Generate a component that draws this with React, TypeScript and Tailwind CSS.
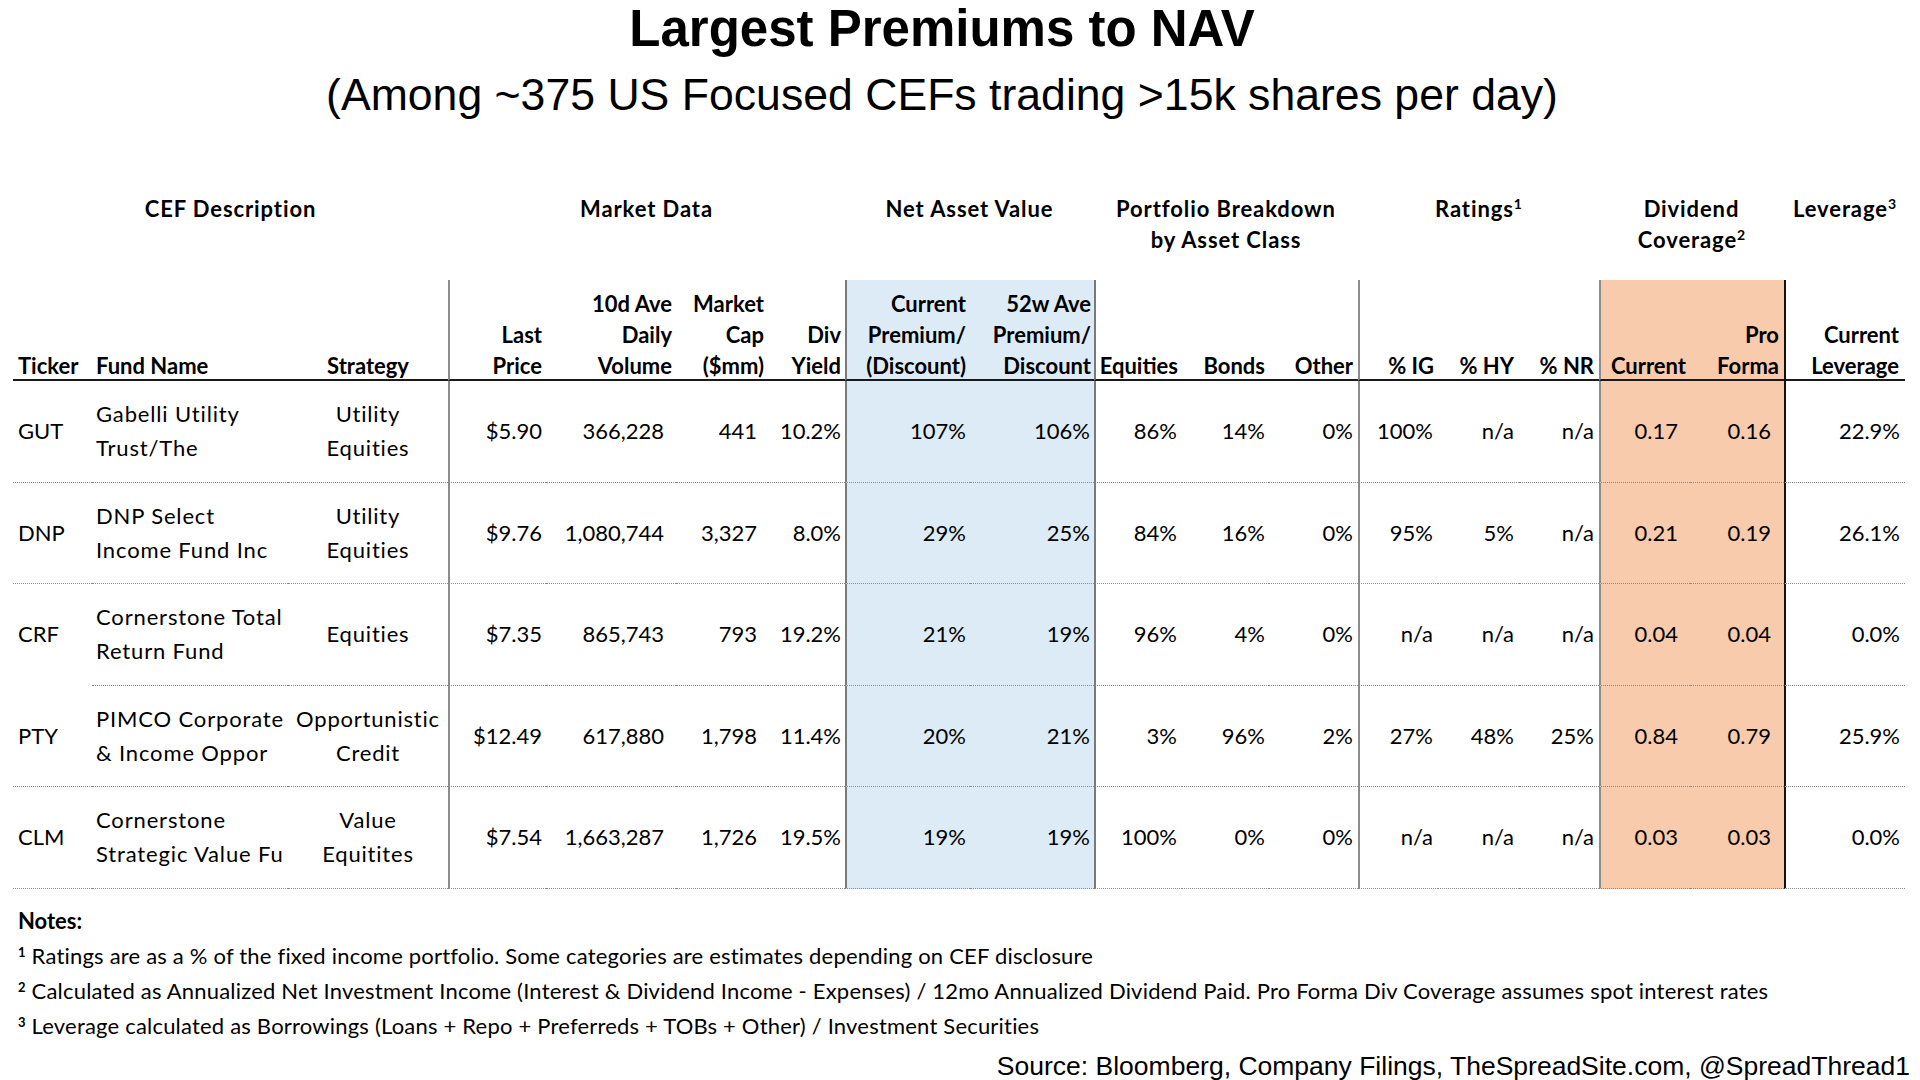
import React from "react";

type Col = {
  w: string;
  line: string;
  bg: string;
  head: string;
  body: string;
  label: string[];
};

const cols: Col[] = [
  { w: "w-[79px]", line: "", bg: "", head: "text-left pl-[5px]", body: "text-left pl-[5px]", label: ["Ticker"] },
  { w: "w-[196px]", line: "", bg: "", head: "text-left pl-[4px]", body: "text-left pl-[4px] tracking-[0.85px]", label: ["Fund Name"] },
  { w: "w-[160px]", line: "", bg: "", head: "text-center", body: "text-center tracking-[0.8px]", label: ["Strategy"] },
  { w: "w-[98px]", line: "border-l-2 border-l-[#8c8c8c]", bg: "", head: "text-right pr-[4px]", body: "text-right pr-[4px]", label: ["Last", "Price"] },
  { w: "w-[130px]", line: "", bg: "", head: "text-right pr-[4px]", body: "text-right pr-[12px]", label: ["10d Ave", "Daily", "Volume"] },
  { w: "w-[92px]", line: "", bg: "", head: "text-right pr-[4px]", body: "text-right pr-[11px]", label: ["Market", "Cap", "($mm)"] },
  { w: "w-[77px]", line: "", bg: "", head: "text-right pr-[4px]", body: "text-right pr-[4px]", label: ["Div", "Yield"] },
  { w: "w-[125px]", line: "border-l-2 border-l-[#7a7a7a]", bg: "bg-[#ddebf7]", head: "text-right pr-[4px]", body: "text-right pr-[4px]", label: ["Current", "Premium/", "(Discount)"] },
  { w: "w-[124px]", line: "", bg: "bg-[#ddebf7]", head: "text-right pr-[3px]", body: "text-right pr-[4px]", label: ["52w Ave", "Premium/", "Discount"] },
  { w: "w-[88px]", line: "border-l-2 border-l-[#7a7a7a]", bg: "", head: "text-right pr-[4px]", body: "text-right pr-[5px]", label: ["Equities"] },
  { w: "w-[87px]", line: "", bg: "", head: "text-right pr-[4px]", body: "text-right pr-[4px]", label: ["Bonds"] },
  { w: "w-[89px]", line: "", bg: "", head: "text-right pr-[5px]", body: "text-right pr-[5px]", label: ["Other"] },
  { w: "w-[80px]", line: "border-l-2 border-l-[#8c8c8c]", bg: "", head: "text-right pr-[4px]", body: "text-right pr-[5px]", label: ["% IG"] },
  { w: "w-[81px]", line: "", bg: "", head: "text-right pr-[5px]", body: "text-right pr-[5px]", label: ["% HY"] },
  { w: "w-[80px]", line: "", bg: "", head: "text-right pr-[5px]", body: "text-right pr-[5px]", label: ["% NR"] },
  { w: "w-[91px]", line: "border-l-2 border-l-[#8c8c8c]", bg: "bg-[#f8cbad]", head: "text-right pr-[4px]", body: "text-right pr-[12px]", label: ["Current"] },
  { w: "w-[94px]", line: "", bg: "bg-[#f8cbad]", head: "text-right pr-[5px]", body: "text-right pr-[13px]", label: ["Pro", "Forma"] },
  { w: "w-[121px]", line: "border-l-2 border-l-[#111]", bg: "", head: "text-right pr-[6px]", body: "text-right pr-[5px]", label: ["Current", "Leverage"] },
];

const groups = [
  { w: "w-[435px]", lines: ["CEF Description"], sup: "" },
  { w: "w-[397px]", lines: ["Market Data"], sup: "" },
  { w: "w-[249px]", lines: ["Net Asset Value"], sup: "" },
  { w: "w-[264px]", lines: ["Portfolio Breakdown", "by Asset Class"], sup: "" },
  { w: "w-[241px]", lines: ["Ratings"], sup: "1" },
  { w: "w-[185px]", lines: ["Dividend", "Coverage"], sup: "2" },
  { w: "w-[121px]", lines: ["Leverage"], sup: "3" },
];

const rows: string[][] = [
  ["GUT", "Gabelli Utility\nTrust/The", "Utility\nEquities", "$5.90", "366,228", "441", "10.2%", "107%", "106%", "86%", "14%", "0%", "100%", "n/a", "n/a", "0.17", "0.16", "22.9%"],
  ["DNP", "DNP Select\nIncome Fund Inc", "Utility\nEquities", "$9.76", "1,080,744", "3,327", "8.0%", "29%", "25%", "84%", "16%", "0%", "95%", "5%", "n/a", "0.21", "0.19", "26.1%"],
  ["CRF", "Cornerstone Total\nReturn Fund", "Equities", "$7.35", "865,743", "793", "19.2%", "21%", "19%", "96%", "4%", "0%", "n/a", "n/a", "n/a", "0.04", "0.04", "0.0%"],
  ["PTY", "PIMCO Corporate\n& Income Oppor", "Opportunistic\nCredit", "$12.49", "617,880", "1,798", "11.4%", "20%", "21%", "3%", "96%", "2%", "27%", "48%", "25%", "0.84", "0.79", "25.9%"],
  ["CLM", "Cornerstone\nStrategic Value Fu", "Value\nEquitites", "$7.54", "1,663,287", "1,726", "19.5%", "19%", "19%", "100%", "0%", "0%", "n/a", "n/a", "n/a", "0.03", "0.03", "0.0%"],
];

const notes = [
  { n: "1", text: "Ratings are as a % of the fixed income portfolio. Some categories are estimates depending on CEF disclosure" },
  { n: "2", text: "Calculated as Annualized Net Investment Income (Interest & Dividend Income - Expenses) / 12mo Annualized Dividend Paid. Pro Forma Div Coverage assumes spot interest rates" },
  { n: "3", text: "Leverage calculated as Borrowings (Loans + Repo + Preferreds + TOBs + Other) / Investment Securities" },
];

const App = () => {
  return (
    <div className="w-[1920px] h-[1080px] bg-white text-black overflow-hidden relative">
      {/* Title */}
      <div className="font-['Liberation_Sans',Arial,sans-serif] pr-[36px]">
        <h1 className="text-center font-bold text-[51px] leading-[56px] pt-[1px]">Largest Premiums to NAV</h1>
        <p className="text-center text-[44.6px] leading-[50px] mt-[13px]">
          (Among ~375 US Focused CEFs trading &gt;15k shares per day)
        </p>
      </div>

      {/* Table */}
      <div className="ml-[13px] w-[1892px] mt-[73px] font-['Lato',sans-serif] text-[22px]">
        <div className="flex h-[87px] font-bold leading-[31px] tracking-[0.9px]">
          {groups.map((g, i) => (
            <div key={i} className={`${g.w} text-center`}>
              {g.lines.map((l, j) => (
                <div key={j}>
                  {l}
                  {g.sup && j === g.lines.length - 1 && (
                    <sup className="text-[14px] tracking-normal -top-[0.6em]">{g.sup}</sup>
                  )}
                </div>
              ))}
            </div>
          ))}
        </div>

        <div className="flex h-[101px] font-bold leading-[31px]">
          {cols.map((c, i) => (
            <div
              key={i}
              className={`${c.w} ${c.line} ${c.bg} ${c.head} border-b-2 border-b-[#1a1a1a] flex flex-col justify-end whitespace-nowrap`}
            >
              {c.label.map((l, j) => (
                <div key={j} className="translate-y-[2px]">{l}</div>
              ))}
            </div>
          ))}
        </div>

        {rows.map((r, ri) => (
          <div key={ri} className="flex h-[101.5px] leading-[34px]">
            {cols.map((c, ci) => (
              <div
                key={ci}
                className={`${c.w} ${c.line} ${c.bg} ${c.body} border-b border-solid [border-bottom-style:dotted] ${
                  ri === 2 && ci === 0 ? "border-b-transparent" : "border-b-[#8a8a8a]"
                } flex flex-col justify-center whitespace-nowrap`}
              >
                {r[ci].split("\n").map((l, j) => (
                  <div key={j}>{l}</div>
                ))}
              </div>
            ))}
          </div>
        ))}

        {/* Notes */}
        <div className="mt-[14px] text-[22px] leading-[35px] pl-[5px]">
          <div className="font-bold">Notes:</div>
          {notes.map((n) => (
            <div key={n.n} className="whitespace-nowrap tracking-[0.2px]">
              <sup className="text-[13px] font-bold">{n.n}</sup> {n.text}
            </div>
          ))}
        </div>
      </div>

      <div className="font-['Liberation_Sans',Arial,sans-serif] text-[26.5px] leading-[30px] text-right pr-[10px] mt-[8px]">
        Source: Bloomberg, Company Filings, TheSpreadSite.com, @SpreadThread1
      </div>
    </div>
  );
};

export default App;
